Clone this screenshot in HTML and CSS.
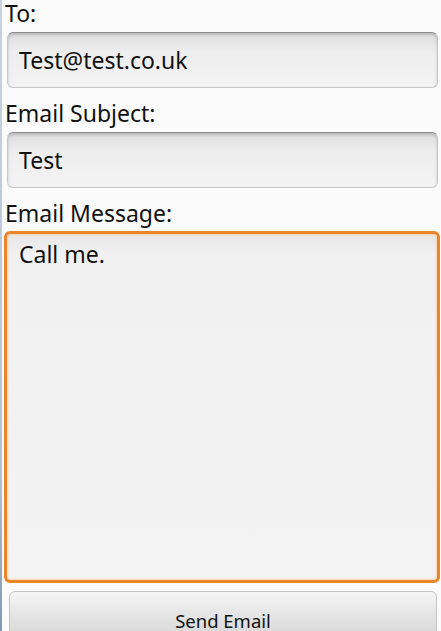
FILE: index.html
```html
<!DOCTYPE html>
<html>
<head>
<meta charset="utf-8">
<link rel="stylesheet" href="styles.css">
</head>
<body>
<div class="screen">
  <div class="label">To:</div>
  <div class="field">Test@test.co.uk</div>
  <div class="label">Email Subject:</div>
  <div class="field">Test</div>
  <div class="label">Email Message:</div>
  <div class="message">Call me.</div>
  <div class="button">Send Email</div>
</div>
</body>
</html>
```
FILE: styles.css
```css
html, body {
  margin: 0;
  padding: 0;
  height: 100%;
  overflow: hidden;
}
body {
  background: #fbfbfb;
  font-family: "Noto Sans", "Open Sans", sans-serif;
  color: #111;
}
.screen {
  height: 631px;
  display: flex;
  flex-direction: column;
  border-left: 2px solid #b4c3d6;
  border-image: linear-gradient(#c7d3e2, #b2c2d6 75%, #7f97b6) 1;
  box-sizing: border-box;
}
.screen > div {
  flex: none;
}
.label {
  font-size: 23px;
  line-height: 26px;
  padding-left: 3px;
  margin-bottom: 6px;
}
.field {
  height: 56px;
  box-sizing: border-box;
  margin: 0 3px 12px 5px;
  padding-left: 11px;
  border: 1px solid #c6c6c6;
  border-top-color: #8c8c8c;
  border-radius: 6px;
  background: linear-gradient(#dedede, #eeeeee 35%, #f3f3f3);
  box-shadow: inset 0 2px 3px rgba(0, 0, 0, 0.18);
  font-size: 23px;
  line-height: 54px;
  display: flex;
  align-items: center;
}
.message {
  height: 352px;
  box-sizing: border-box;
  margin: -1px 1px 8px 2px;
  border: 3px solid #e9852a;
  border-radius: 6px;
  background: linear-gradient(#e8e7e7, #f2f1f1 6%, #f4f3f3);
  box-shadow: inset 0 0 2px 1px rgba(255, 200, 140, 0.7);
  padding: 5px 0 0 12px;
  font-size: 23px;
  line-height: 30px;
}
.button {
  height: 48px;
  box-sizing: border-box;
  margin: 0 4px 0 7px;
  border: 1px solid #c3c3c3;
  border-radius: 6px;
  background: linear-gradient(#f6f6f6, #e8e8e8 40%, #d6d6d6);
  font-size: 18.5px;
  line-height: 20px;
  padding-top: 19px;
  text-align: center;
  color: #111;
}
```
